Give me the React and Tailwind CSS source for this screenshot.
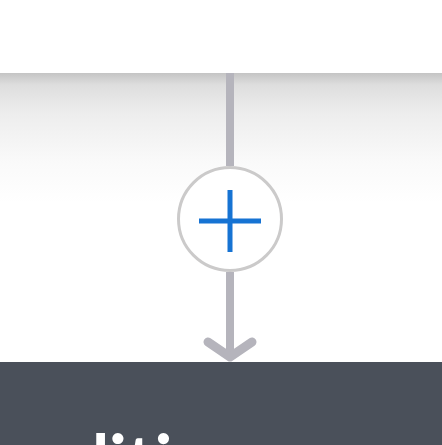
export default function App() {
  return (
    <div className="w-[442px] h-[445px] overflow-hidden flex flex-col bg-white" style={{ fontFamily: "Lato, 'Open Sans', sans-serif" }}>
      <div className="h-[73px] shrink-0 bg-white" />
      <div className="h-[289px] shrink-0 flex flex-col items-center pl-[17px] bg-[linear-gradient(to_bottom,#c4c4c4_0px,#dedede_12px,#ededed_40px,#fafafa_90px,#ffffff_130px)]">
        <div className="w-[8px] h-[93px] bg-[#b5b4bc] shrink-0" />
        <div className="w-[106px] h-[106px] shrink-0 rounded-full border-[3px] border-[#cbcaca] bg-white flex items-center justify-center">
          <svg width="64" height="64" viewBox="0 0 64 64" className="mt-[3px]">
            <path d="M32 1 V63 M1 32 H63" stroke="#1673d3" strokeWidth="5" fill="none" />
          </svg>
        </div>
        <svg width="60" height="90" viewBox="0 0 60 90" className="shrink-0 overflow-visible">
          <path d="M30 0 V85" stroke="#b5b4bc" strokeWidth="8" fill="none" />
          <path d="M8 70 L30 85 L52 70" stroke="#b5b4bc" strokeWidth="9" fill="none" strokeLinecap="round" strokeLinejoin="round" />
        </svg>
      </div>
      <div className="flex-1 bg-[#4a505a] pl-[32px] pt-[62px]">
        <div className="text-white font-bold text-[70px] leading-none whitespace-nowrap">editing</div>
      </div>
    </div>
  );
}
